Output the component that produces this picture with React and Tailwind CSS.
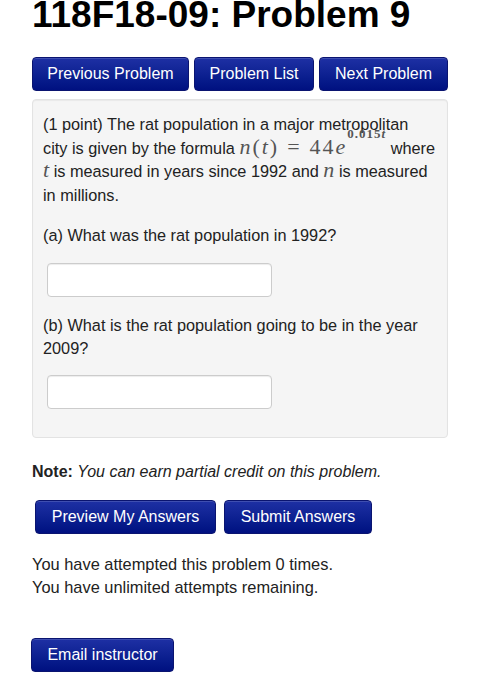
import React from "react";

const font = { fontFamily: '"Liberation Sans", Arial, sans-serif' };
const serif = { fontFamily: '"Liberation Serif", "Times New Roman", serif' };

function Btn({ children, className = "" }) {
  return (
    <button
      className={
        "h-[34px] rounded-[4px] border border-[#0a1470] bg-gradient-to-b from-[#1e30a4] to-[#001080] text-white text-[16px] leading-[20px] shadow-[inset_0_1px_0_rgba(255,255,255,0.15)] " +
        className
      }
    >
      {children}
    </button>
  );
}

function M({ children, className = "" }) {
  return (
    <span className={"italic text-[#555] text-[22px] leading-[14px] " + className} style={serif}>
      {children}
    </span>
  );
}

function R({ children, className = "" }) {
  return (
    <span className={"text-[#555] text-[22px] leading-[14px] " + className} style={serif}>
      {children}
    </span>
  );
}

export default function App() {
  return (
    <div className="w-[480px] h-[700px] bg-white overflow-hidden text-[#222]" style={font}>
      <div className="pl-[32px] pr-[32px]">
        <h1 className="text-[37px] leading-[40px] font-bold text-black mt-[-5px] whitespace-nowrap">
          118F18-09: Problem 9
        </h1>

        <div className="flex gap-[5px] mt-[22px]">
          <Btn className="w-[157px]">Previous Problem</Btn>
          <Btn className="w-[120px]">Problem List</Btn>
          <Btn className="w-[129px]">Next Problem</Btn>
        </div>

        <div className="mt-[8px] w-[416px] rounded-[4px] border border-[#e3e3e3] bg-[#f5f5f5] px-[10px] pt-[13px] pb-[14px] text-[16.3px] leading-[23.5px] shadow-[inset_0_1px_1px_rgba(0,0,0,0.05)]">
          <p className="whitespace-nowrap">
            (1 point) The rat population in a major metropolitan
            <br />
            city is given by the formula{" "}
            <span className="tracking-[2px]">
              <M>n</M>
              <R>(</R>
              <M>t</M>
              <R>)</R>
              <R className="mx-[8px]">=</R>
              <R>44</R>
              <M>e</M>
              <sup
                className="text-[13px] leading-none font-bold text-[#555] top-[-16px] tracking-[1px]"
                style={serif}
              >
                0.015<span className="italic">t</span>
              </sup>
            </span>{" "}
            where
            <br />
            <M>t</M> is measured in years since 1992 and <M>n</M> is measured
            <br />
            in millions.
          </p>
          <p className="mt-[17px]">(a) What was the rat population in 1992?</p>
          <div className="mt-[15px] ml-[4px] w-[225px] h-[34px] rounded-[4px] border border-[#cccccc] bg-white shadow-[inset_0_1px_1px_rgba(0,0,0,0.075)]" />
          <p className="mt-[17px]">
            (b) What is the rat population going to be in the year
            <br />
            2009?
          </p>
          <div className="mt-[14px] mb-[14px] ml-[4px] w-[225px] h-[34px] rounded-[4px] border border-[#cccccc] bg-white shadow-[inset_0_1px_1px_rgba(0,0,0,0.075)]" />
        </div>

        <p className="mt-[22px] text-[16px] leading-[23px]">
          <b>Note:</b> <i>You can earn partial credit on this problem.</i>
        </p>

        <div className="flex gap-[8px] mt-[17px] ml-[3px]">
          <Btn className="w-[181px]">Preview My Answers</Btn>
          <Btn className="w-[148px]">Submit Answers</Btn>
        </div>

        <div className="mt-[19px] text-[16.4px] leading-[23px]">
          <p>You have attempted this problem 0 times.</p>
          <p>You have unlimited attempts remaining.</p>
        </div>

        <div className="mt-[39px] ml-[-1px]">
          <Btn className="w-[143px]">Email instructor</Btn>
        </div>
      </div>
    </div>
  );
}
